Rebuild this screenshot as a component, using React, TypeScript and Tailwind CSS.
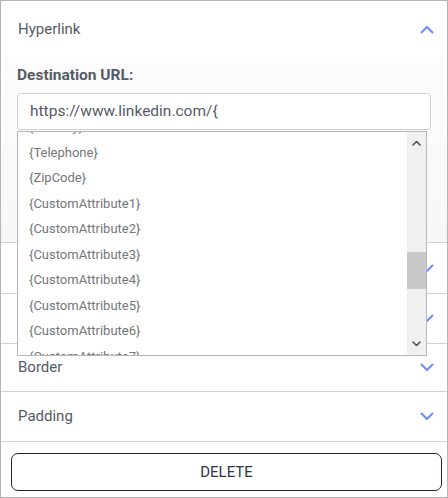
import React from 'react';

const sections = [
    { label: 'Link Style', h: 'h-[51px]' },
    { label: 'Text', h: 'h-[50px]' },
    { label: 'Border', h: 'h-[48px]' },
    { label: 'Padding', h: 'h-[50px]' },
];

const tokens = [
    '{Country}',
    '{Telephone}',
    '{ZipCode}',
    '{CustomAttribute1}',
    '{CustomAttribute2}',
    '{CustomAttribute3}',
    '{CustomAttribute4}',
    '{CustomAttribute5}',
    '{CustomAttribute6}',
    '{CustomAttribute7}',
];

function Chevron({ up }: { up?: boolean }) {
    return (
        <svg width="14" height="9" viewBox="0 0 14 9" fill="none">
            <path
                d={up ? 'M1.5 7.5 L7 2 L12.5 7.5' : 'M1.5 1.5 L7 7 L12.5 1.5'}
                stroke="#6f8aff"
                strokeWidth="2"
                strokeLinecap="round"
                strokeLinejoin="round"
            />
        </svg>
    );
}

function SmallCaret({ up }: { up?: boolean }) {
    return (
        <svg width="9" height="6" viewBox="0 0 9 6" fill="none">
            <path
                d={up ? 'M1 5 L4.5 1.5 L8 5' : 'M1 1 L4.5 4.5 L8 1'}
                stroke="#505050"
                strokeWidth="1.6"
                strokeLinecap="round"
                strokeLinejoin="round"
            />
        </svg>
    );
}

export default function App() {
    return (
        <div
            className="relative w-[448px] h-[498px] border border-[#b4b4b4] bg-white flex flex-col overflow-hidden"
            style={{ fontFamily: 'Roboto, "Liberation Sans", sans-serif' }}
        >
            <div className="h-[242px] border-b border-[#cfcfcf] flex flex-col">
                <div className="h-[55px] flex items-center justify-between pl-[17px] pr-[13px] pt-[1px]">
                    <span className="text-[15px] text-[#555b66]">Hyperlink</span>
                    <Chevron up />
                </div>
                <div className="flex-1 bg-gradient-to-b from-[#fdfdfd] to-[#f7f7f7] px-[16px]">
                    <div className="text-[15.5px] font-bold text-[#555b66] mt-[9px] leading-[20px]">
                        Destination URL:
                    </div>
                    <div className="mt-[8px] h-[37px] border border-[#d0d0d0] rounded-[3px] bg-white flex items-center pl-[12px] text-[15.5px] text-[#555b66]">
                        https://www.linkedin.com/{'{'}
                    </div>
                </div>
            </div>
            {sections.map((s) => (
                <div
                    key={s.label}
                    className={`${s.h} border-b border-[#cfcfcf] flex items-center justify-between pl-[17px] pr-[13px]`}
                >
                    <span className="text-[15px] text-[#555b66]">{s.label}</span>
                    <Chevron />
                </div>
            ))}
            <div className="flex-1 pl-[10px] pr-[5px] pt-[11px]">
                <button className="w-full h-[38px] border border-[#22223a] rounded-[7px] text-[15px] text-[#333344] bg-white">
                    DELETE
                </button>
            </div>

            <div className="absolute left-[16px] top-[130px] w-[410px] h-[225px] border border-[#b8b8b8] bg-white flex overflow-hidden">
                <div className="flex-1 overflow-hidden">
                    <div className="mt-[-18px] flex flex-col">
                        {tokens.map((t) => (
                            <div
                                key={t}
                                className="h-[25.5px] flex items-center pl-[11px] text-[13px] text-[#74767c]"
                            >
                                {t}
                            </div>
                        ))}
                    </div>
                </div>
                <div className="w-[19px] bg-[#f0f0f0] flex flex-col items-center">
                    <div className="h-[20px] flex items-center justify-center pt-[1px]">
                        <SmallCaret up />
                    </div>
                    <div className="h-[100px]" />
                    <div className="w-full h-[37px] bg-[#c8c8c8]" />
                    <div className="flex-1" />
                    <div className="h-[20px] flex items-center justify-center pb-[2px]">
                        <SmallCaret />
                    </div>
                </div>
            </div>
        </div>
    );
}
